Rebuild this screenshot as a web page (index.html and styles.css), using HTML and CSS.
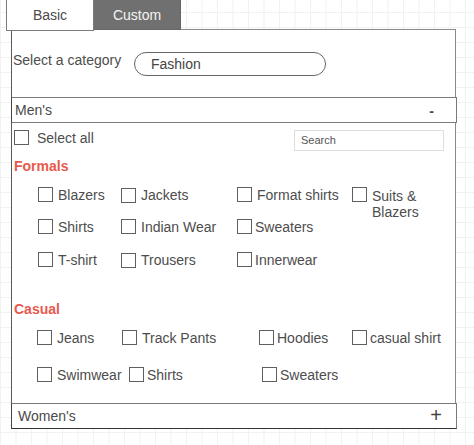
FILE: index.html
```html
<!DOCTYPE html>
<html>
<head>
<meta charset="utf-8">
<link rel="stylesheet" href="styles.css">
</head>
<body>
<div class="tabs">
  <div class="tab tab-basic">Basic</div>
  <div class="tab tab-custom">Custom</div>
</div>
<div class="panel">
  <div class="category-row">
    <span class="category-label">Select a category</span>
    <div class="pill">Fashion</div>
  </div>
  <div class="section-header men">
    <span>Men's</span>
    <span class="toggle minus">-</span>
  </div>
  <div class="select-row">
    <label class="item item-wide"><span class="box"></span><span class="lbl">Select all</span></label>
    <div class="search">Search</div>
  </div>
  <div class="group-title formals-title">Formals</div>
  <div class="formals-grid">
    <label class="item"><span class="box"></span><span class="lbl">Blazers</span></label>
    <label class="item item-low"><span class="box"></span><span class="lbl">Jackets</span></label>
    <label class="item"><span class="box"></span><span class="lbl">Format shirts</span></label>
    <label class="item item-suits"><span class="box"></span><span class="lbl">Suits &amp;<br>Blazers</span></label>
    <label class="item"><span class="box"></span><span class="lbl">Shirts</span></label>
    <label class="item"><span class="box"></span><span class="lbl">Indian Wear</span></label>
    <label class="item item-tight"><span class="box"></span><span class="lbl">Sweaters</span></label>
    <span></span>
    <label class="item"><span class="box"></span><span class="lbl">T-shirt</span></label>
    <label class="item item-low"><span class="box"></span><span class="lbl">Trousers</span></label>
    <label class="item item-tight"><span class="box"></span><span class="lbl">Innerwear</span></label>
  </div>
  <div class="group-title casual-title">Casual</div>
  <div class="casual-row casual-row-1">
    <label class="item"><span class="box"></span><span class="lbl">Jeans</span></label>
    <label class="item"><span class="box"></span><span class="lbl">Track Pants</span></label>
    <label class="item item-tight"><span class="box"></span><span class="lbl">Hoodies</span></label>
    <label class="item item-tight"><span class="box"></span><span class="lbl">casual shirt</span></label>
  </div>
  <div class="casual-row casual-row-2">
    <label class="item"><span class="box"></span><span class="lbl">Swimwear</span></label>
    <label class="item item-tight"><span class="box"></span><span class="lbl">Shirts</span></label>
    <label class="item item-tight"><span class="box"></span><span class="lbl">Sweaters</span></label>
  </div>
  <div class="section-header women">
    <span>Women's</span>
    <span class="toggle plus">+</span>
  </div>
</div>
</body>
</html>
```
FILE: styles.css
```css
* { box-sizing: border-box; }
html, body { margin: 0; padding: 0; }
body {
  width: 474px;
  height: 445px;
  overflow: hidden;
  font-family: "Liberation Sans", Arial, sans-serif;
  font-size: 14px;
  color: #4d4d4d;
  background-color: #ffffff;
  background-image:
    linear-gradient(to right, #f1f1f1 1px, transparent 1px),
    linear-gradient(to bottom, #f1f1f1 1px, transparent 1px);
  background-size: 15.5px 15px;
  background-position: 0 -3px;
}
.tabs {
  display: flex;
  padding-left: 6px;
  height: 31px;
  position: relative;
  z-index: 1;
}
.tab {
  height: 31px;
  line-height: 30px;
  text-align: center;
}
.tab-basic {
  width: 88px;
  background: #fff;
  border: 1px solid #7a7a7a;
  border-top: none;
  color: #4a4a4a;
}
.tab-custom {
  width: 87px;
  height: 30px;
  background: #707070;
  border: 1px solid #666;
  border-top: none;
  border-left: none;
  color: #f4f4f4;
  line-height: 31px;
}
.panel {
  margin: -2px 0 0 11px;
  width: 445px;
  background: #fff;
  border: 1px solid #8a8a8a;
  border-bottom: none;
  border-left-color: #5a5a5a;
}
.category-row {
  display: flex;
  align-items: flex-start;
  padding: 22px 0 0 1px;
  height: 67px;
}
.category-label {
  line-height: 16px;
  width: 121px;
}
.pill {
  width: 192px;
  height: 24px;
  border: 1px solid #666;
  border-radius: 12px;
  padding-left: 16px;
  line-height: 22px;
  color: #444;
}
.section-header {
  display: flex;
  justify-content: space-between;
  align-items: center;
  height: 26px;
  margin: 0 -2px 0 -1px;
  border: 1px solid #7a7a7a;
  border-left-color: #444;
  padding: 0 0 0 3px;
  background: #fff;
  color: #4a4a4a;
}
.minus {
  font-weight: bold;
  margin-right: 22px;
  margin-top: 1px;
}
.section-header.women {
  margin-top: 20px;
  padding-left: 6px;
  border-bottom-color: #333;
}
.plus {
  font-size: 20px;
  line-height: 20px;
  margin-right: 14px;
  margin-top: -3px;
  color: #444;
}
.select-row {
  display: flex;
  justify-content: space-between;
  align-items: flex-start;
  padding: 7px 11px 0 2px;
  height: 35px;
}
.search {
  width: 150px;
  height: 21px;
  border: 1px solid #dedede;
  font-size: 11px;
  line-height: 19px;
  padding-left: 6px;
  color: #555;
}
.item {
  display: flex;
  align-items: flex-start;
  gap: 5px;
  line-height: 16px;
  white-space: nowrap;
}
.item-wide { gap: 8px; }
.item-tight { gap: 3px; }
.item-low .box { margin-top: 1px; }
.box {
  flex: none;
  width: 15px;
  height: 15px;
  border: 1px solid #5f5f5f;
  background: #fff;
}
.item-suits .lbl { margin-top: 1px; }
.group-title {
  color: #e8594d;
  font-weight: bold;
  line-height: 16px;
  padding-left: 2px;
}
.formals-grid {
  display: grid;
  grid-template-columns: 83px 116px 115px auto;
  grid-template-rows: 32px 33px 33px;
  margin-top: 13px;
  padding-left: 26px;
}
.casual-title { margin-top: 16px; }
.casual-row {
  display: grid;
  padding-left: 25px;
}
.casual-row-1 {
  grid-template-columns: 85px 137px 93px auto;
  margin-top: 13px;
  height: 37px;
}
.casual-row-2 {
  grid-template-columns: 92px 133px auto;
  height: 16px;
}
```
